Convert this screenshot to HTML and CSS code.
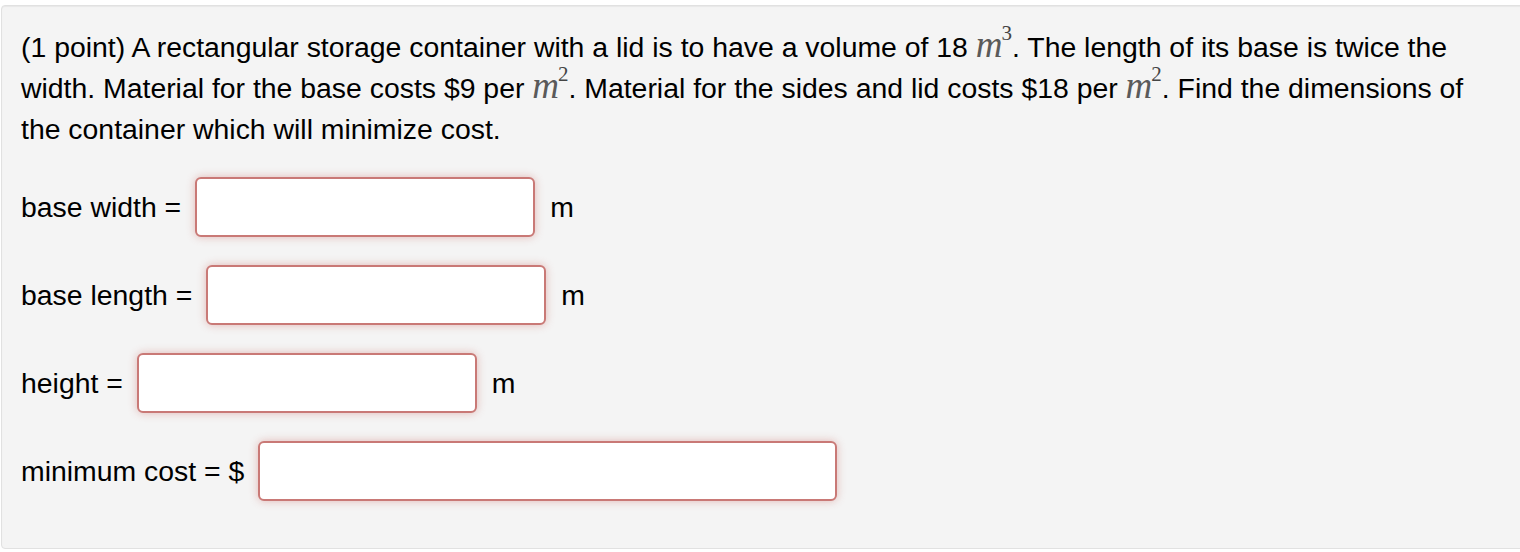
FILE: index.html
```html
<!DOCTYPE html>
<html lang="en">
<head>
<meta charset="utf-8">
<title>Problem</title>
<link rel="stylesheet" href="styles.css">
</head>
<body>
<div class="well">
  <p class="question">(1 point) A rectangular storage container with a lid is to have a volume of 18 <span class="math"><i>m</i><sup>3</sup></span>. The length of its base is twice the width. Material for the base costs $9 per <span class="math"><i>m</i><sup>2</sup></span>. Material for the sides and lid costs $18 per <span class="math"><i>m</i><sup>2</sup></span>. Find the dimensions of the container which will minimize cost.</p>
  <div class="rows">
    <div class="row"><span class="label">base width =</span><input class="answer" type="text"><span class="unit">m</span></div>
    <div class="row"><span class="label">base length =</span><input class="answer" type="text"><span class="unit">m</span></div>
    <div class="row"><span class="label">height =</span><input class="answer" type="text"><span class="unit">m</span></div>
    <div class="row"><span class="label">minimum cost = $</span><input class="answer wide" type="text"></div>
  </div>
</div>
</body>
</html>
```
FILE: styles.css
```css
html, body {
  margin: 0;
  padding: 0;
  overflow: hidden;
  background: #ffffff;
}
body {
  font-family: "Liberation Sans", Arial, sans-serif;
  font-size: 28.4px;
  color: #000;
}
.well {
  margin: 5px 0 0 1px;
  width: 1560px;
  box-sizing: border-box;
  background: #f4f4f4;
  border: 1px solid #e1e1e1;
  border-radius: 4px;
  box-shadow: inset 0 1px 1px rgba(0,0,0,0.05);
  padding: 21px 19px 47px 19px;
}
.question {
  margin: 0;
  width: 1488px;
  line-height: 41px;
}
.math {
  font-family: "Liberation Serif", "Times New Roman", serif;
  color: #5a5a5a;
  font-size: 37px;
  line-height: 0;
}
.math i {
  font-style: italic;
}
.math sup {
  font-size: 21px;
  font-style: normal;
  vertical-align: baseline;
  position: relative;
  top: -17px;
  margin-left: -1px;
  color: #444;
}
.rows {
  display: flex;
  flex-direction: column;
  gap: 28px;
  margin-top: 27px;
}
.row {
  display: flex;
  align-items: center;
  height: 60px;
}
.answer {
  box-sizing: border-box;
  width: 340px;
  height: 60px;
  margin-left: 14px;
  border: 2px solid #c97976;
  border-radius: 6px;
  background: #fff;
  box-shadow: 0 0 8px rgba(205, 110, 105, 0.45);
  font-size: 24px;
  padding: 0 10px;
}
.answer.wide {
  width: 579px;
}
.unit {
  margin-left: 15px;
}
```
